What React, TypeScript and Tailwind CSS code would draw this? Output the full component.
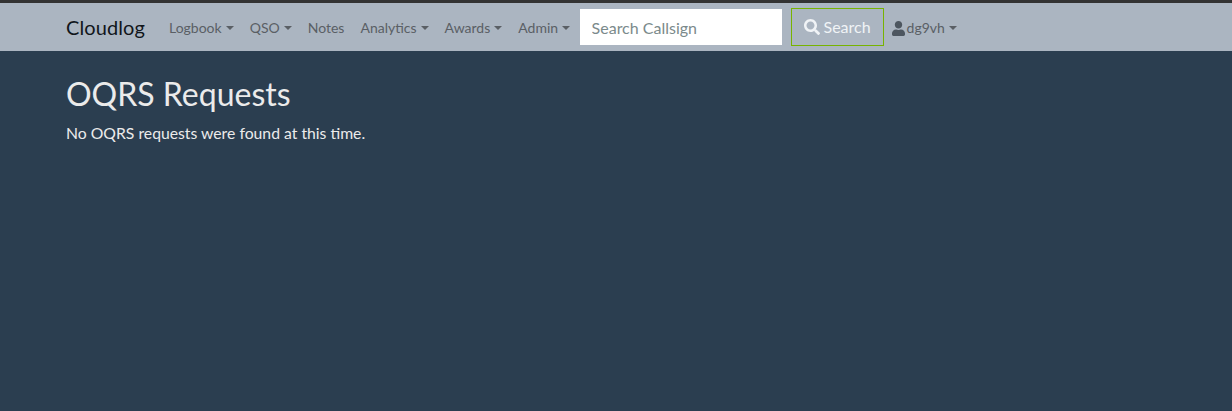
import React from "react";

function Caret() {
  return <span className="ml-[4px] inline-block align-[2.5px] border-x-[4px] border-t-[4px] border-x-transparent border-t-current" />;
}

function NavItem({ label, caret = true }: { label: string; caret?: boolean }) {
  return (
    <a className="px-2 pt-[9px] pb-[7px] text-[14px] text-[#5a5f65] whitespace-nowrap">
      {label}
      {caret && <Caret />}
    </a>
  );
}

export default function App() {
  return (
    <div className="min-h-[411px] bg-[#2b3e50] font-['Lato','Noto_Sans',sans-serif] text-[15.75px] leading-[22.5px] text-[#ebebeb]">
      <div className="h-[3px] bg-[#333333]" />
      <nav className="flex h-[48px] items-center bg-[#abb5c1] pl-[66px]">
        <a className="mr-4 text-[20px] leading-[30px] tracking-[0.1px] text-[#11161b]">Cloudlog</a>
        <NavItem label="Logbook" />
        <NavItem label="QSO" />
        <NavItem label="Notes" caret={false} />
        <NavItem label="Analytics" />
        <NavItem label="Awards" />
        <NavItem label="Admin" />
        <input
          placeholder="Search Callsign"
          className="ml-[1.5px] h-[36px] w-[202px] bg-white px-3 text-[16px] text-[#5f6b75] outline-none placeholder:text-[#7b8a8b]"
        />
        <button className="ml-[9px] flex h-[38px] w-[93px] items-center justify-center gap-[4px] border border-[#77b300] text-[16px] text-[#f0f3f6]">
          <svg viewBox="0 0 512 512" className="h-[16px] w-[16px] fill-current">
            <path d="M505 442.7L405.3 343c-4.500-4.500-10.600-7-17-7H372c27.600-35.300 44-79.700 44-128C416 93.100 322.900 0 208 0S0 93.100 0 208s93.100 208 208 208c48.300 0 92.700-16.400 128-44v16.300c0 6.400 2.500 12.500 7 17l99.700 99.700c9.400 9.400 24.600 9.400 33.900 0l28.300-28.300c9.400-9.400 9.400-24.600.1-34zM208 336c-70.700 0-128-57.200-128-128 0-70.700 57.200-128 128-128 70.700 0 128 57.200 128 128 0 70.700-57.200 128-128 128z" />
          </svg>
          Search
        </button>
        <a className="flex items-center whitespace-nowrap px-2 pt-[9px] pb-[7px] text-[14px] text-[#5a5f65]">
          <svg viewBox="0 0 448 512" className="mr-[2px] h-[15px] w-[13px] fill-[#4d5660]">
            <path d="M224 256c70.700 0 128-57.300 128-128S294.700 0 224 0 96 57.300 96 128s57.300 128 128 128zm89.600 32h-16.700c-22.200 10.200-46.900 16-72.900 16s-50.600-5.800-72.900-16h-16.700C60.200 288 0 348.200 0 422.400V464c0 26.500 21.500 48 48 48h352c26.500 0 48-21.500 48-48v-41.600c0-74.200-60.200-134.400-134.400-134.400z" />
          </svg>
          dg9vh
          <Caret />
        </a>
      </nav>
      <main className="pl-[66px] pt-[20px]">
        <h1 className="text-[32px] leading-[46px] font-normal">OQRS Requests</h1>
        <p className="mt-[5px]">No OQRS requests were found at this time.</p>
      </main>
    </div>
  );
}
